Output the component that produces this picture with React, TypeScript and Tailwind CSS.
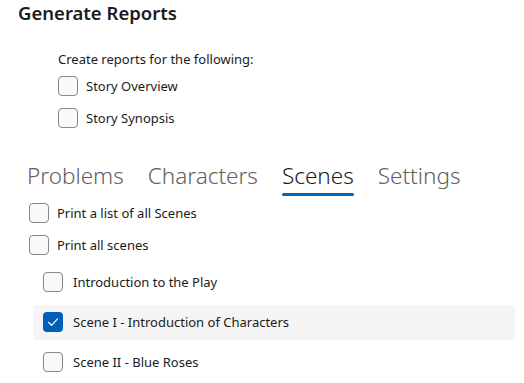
import React from "react";

function Box({ checked = false }: { checked?: boolean }) {
  if (checked) {
    return (
      <div className="w-[20px] h-[20px] shrink-0 rounded-[4px] bg-[#005fb8] flex items-center justify-center">
        <svg width="12" height="12" viewBox="0 0 12 12" fill="none">
          <path d="M1.5 6.3 L4.6 9.3 L10.5 2.8" stroke="#ffffff" strokeWidth="1.2" strokeLinecap="round" strokeLinejoin="round" />
        </svg>
      </div>
    );
  }
  return <div className="w-[20px] h-[20px] shrink-0 rounded-[4px] border border-[#878787] bg-[#f9f9f9]" />;
}

function Row({
  label,
  checked = false,
  className = "",
  gap = "gap-[8px]",
}: {
  label: string;
  checked?: boolean;
  className?: string;
  gap?: string;
}) {
  return (
    <div className={`flex items-center ${gap} ${className}`}>
      <Box checked={checked} />
      <span className="text-[13px] text-[#1b1b1b] leading-[18px]">{label}</span>
    </div>
  );
}

export default function App() {
  const tabs = ["Problems", "Characters", "Scenes", "Settings"];
  return (
    <div
      className="w-[524px] h-[383px] bg-white overflow-hidden flex flex-col"
      style={{ fontFamily: '"Noto Sans", "Open Sans", sans-serif' }}
    >
      <div className="h-[50px] pl-[18px] text-[18.5px] font-semibold leading-[26px] text-[#1b1b1b]">Generate Reports</div>
      <div className="h-[20px] pl-[58px] flex items-center text-[13px] text-[#1b1b1b]">Create reports for the following:</div>
      <Row label="Story Overview" className="h-[32px] pl-[58px]" />
      <Row label="Story Synopsis" className="h-[32px] pl-[58px]" />
      <div className="mt-[26px] pl-[27px] flex gap-[24px]">
        {tabs.map((t) => {
          const active = t === "Scenes";
          return (
            <div key={t} className="flex flex-col items-center">
              <div
                className={`h-[32px] leading-[32px] text-[22.5px] font-light ${active ? "text-[#1b1b1b]" : "text-[#616161]"}`}
              >
                {t}
              </div>
              <div className={`mt-[1px] h-[3px] w-full rounded-full ${active ? "bg-[#0067c0]" : "bg-transparent"}`} />
            </div>
          );
        })}
      </div>
      <Row label="Print a list of all Scenes" className="mt-[1px] h-[32px] pl-[29px]" />
      <Row label="Print all scenes" className="h-[32px] pl-[29px]" />
      <div className="mt-[1px] flex flex-col">
        <div className="h-[40px] flex items-center">
          <Row label="Introduction to the Play" className="pl-[43px]" gap="gap-[10px]" />
        </div>
        <div className="h-[40px] flex items-center">
          <div className="ml-[33px] w-[482px] h-[35px] rounded-[4px] bg-[#f5f5f5] flex items-center pl-[10px]">
            <Row label="Scene I - Introduction of Characters" checked gap="gap-[10px]" />
          </div>
        </div>
        <div className="h-[40px] flex items-center">
          <Row label="Scene II - Blue Roses" className="pl-[43px]" gap="gap-[10px]" />
        </div>
      </div>
    </div>
  );
}
